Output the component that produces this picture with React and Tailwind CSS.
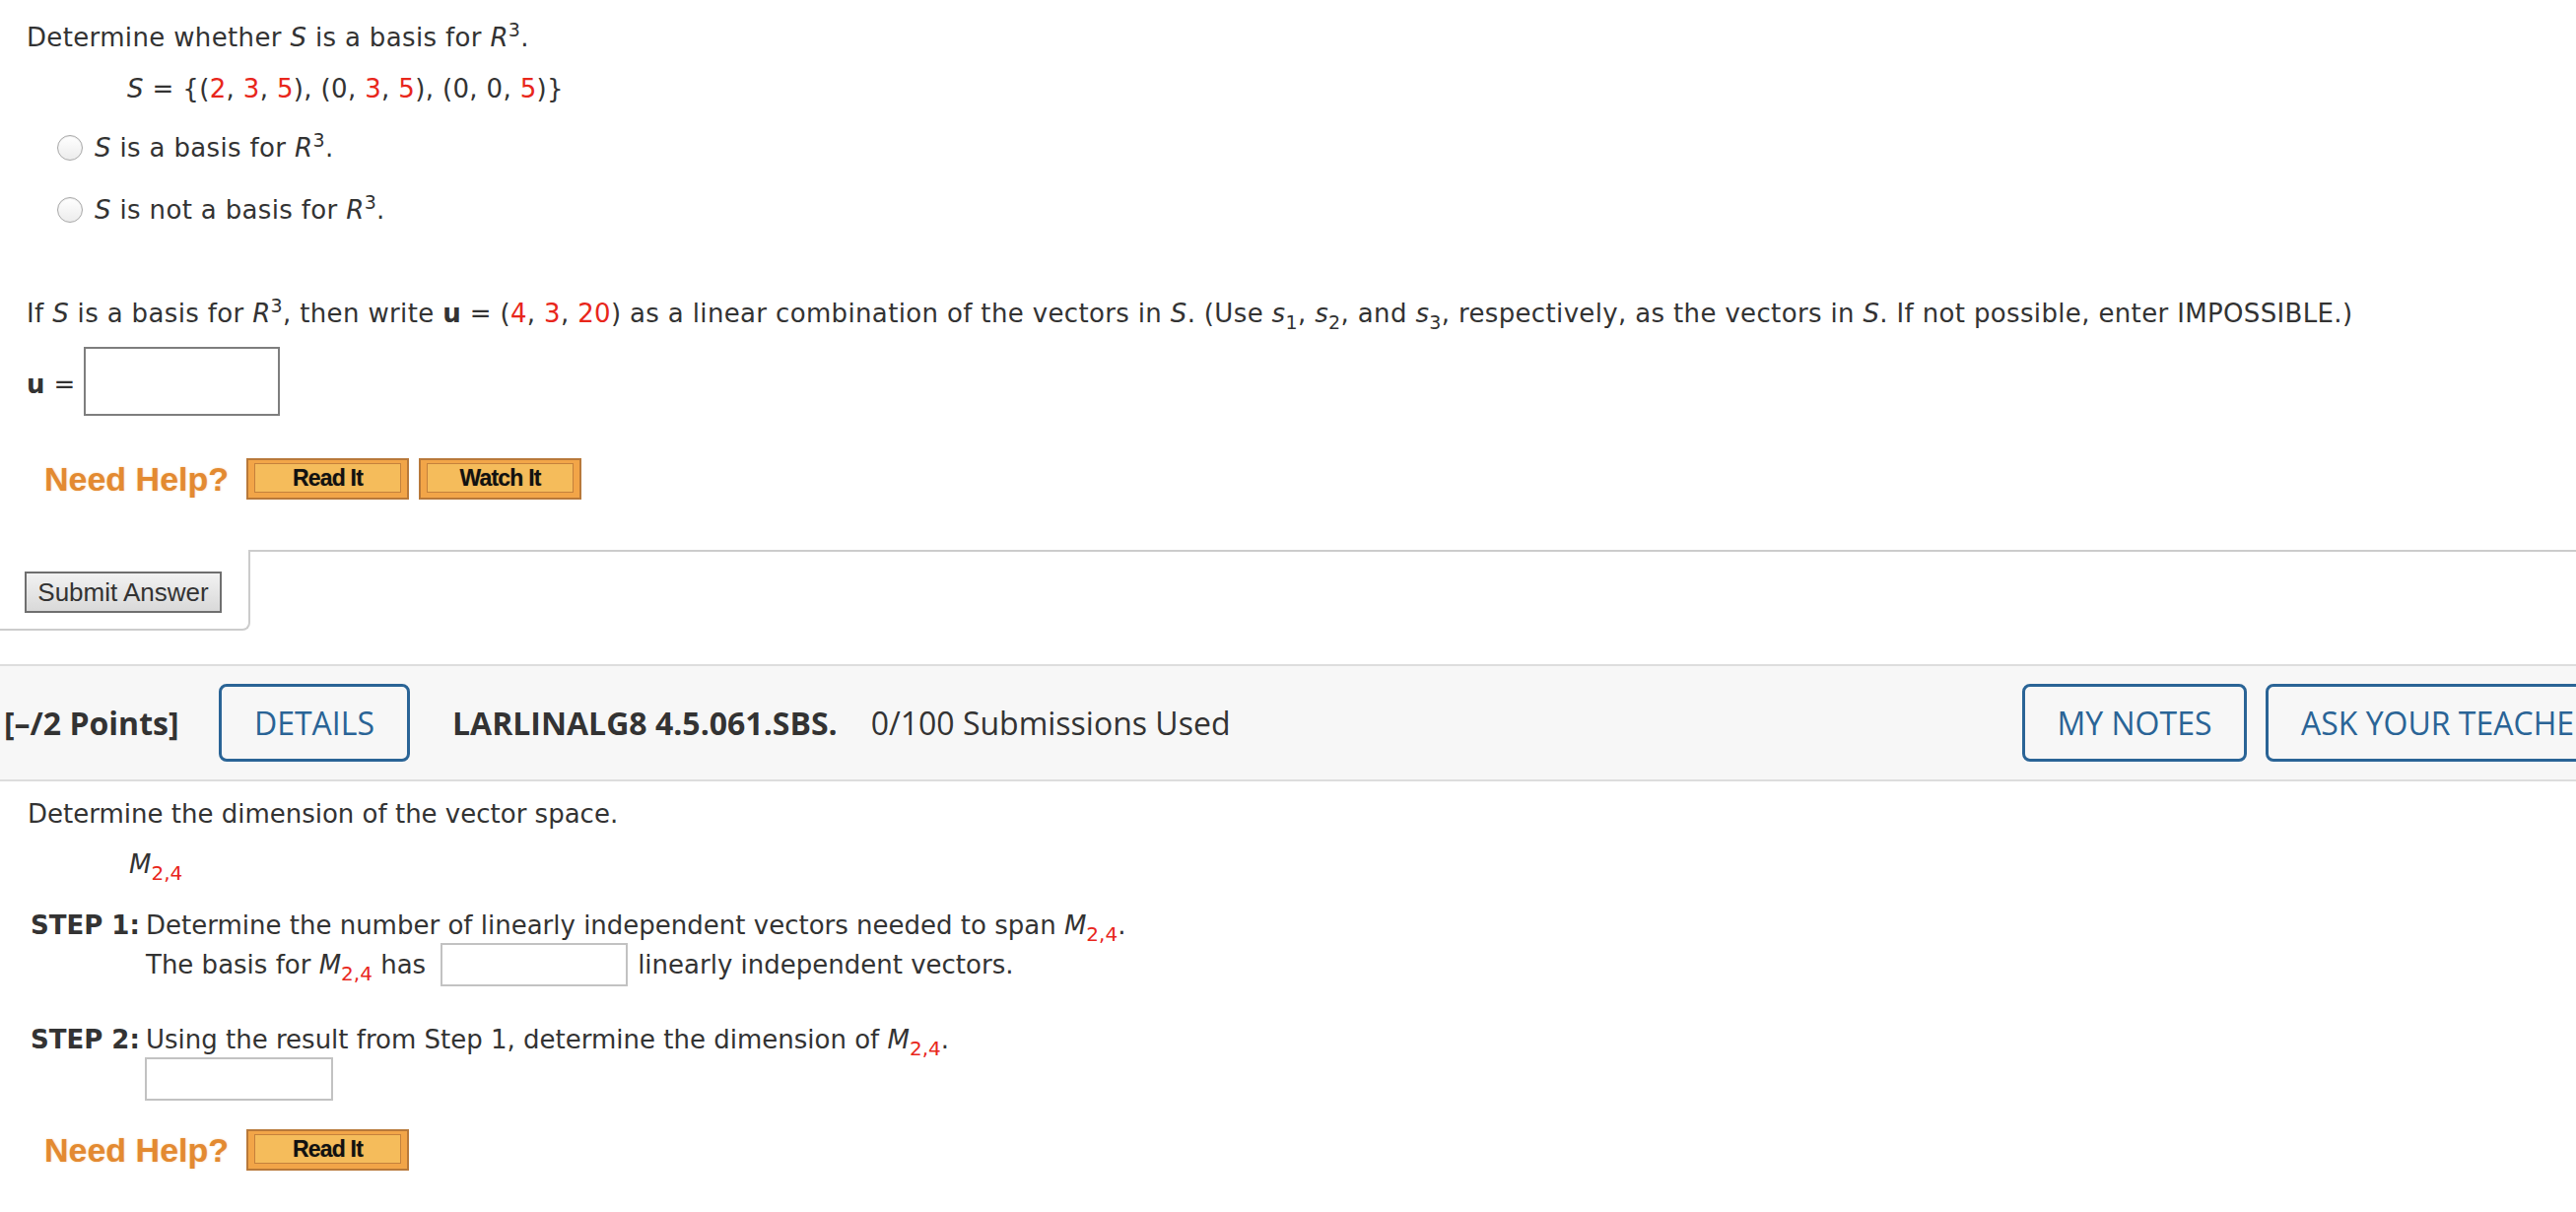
import React from "react";

const RED = "text-[#e8261b]";

function Sup({ children }) {
  return <span className="relative top-[-10px] text-[19px] leading-none">{children}</span>;
}

function Sub({ children, red }) {
  return (
    <span className={`relative top-[7px] text-[19px] leading-none ${red ? RED : ""}`}>{children}</span>
  );
}

function R3() {
  return (
    <>
      <i>R</i>
      <Sup>3</Sup>
    </>
  );
}

function M24() {
  return (
    <>
      <i>M</i>
      <span className={`relative top-[7px] text-[20px] leading-none ${RED}`}>2,4</span>
    </>
  );
}

function Radio({ children }) {
  return (
    <label className="flex items-center h-[32px]">
      <span className="w-[26px] h-[26px] rounded-full border border-[#a8a8a8] bg-gradient-to-b from-white to-[#ececec] shadow-[inset_0_1px_1px_rgba(0,0,0,0.08)]" />
      <span className="ml-[12px]">{children}</span>
    </label>
  );
}

function HelpButton({ label, w = "w-[165px]" }) {
  return (
    <div className={`${w} h-[42px] border-2 border-[#b8793a] bg-[#f2a548] pt-[3px] pb-[5px] px-[6px]`}>
      <div className="h-full border border-[#c4813c] bg-[#f5bc5b] flex items-center justify-center font-['Liberation_Sans',Arial,sans-serif] font-bold text-[23px] tracking-[-0.8px] text-[#111] [text-shadow:0_0_1px_rgba(0,0,0,0.35)]">
        {label}
      </div>
    </div>
  );
}

function NeedHelp({ children }) {
  return (
    <div className="flex items-center h-[42px] pl-[45px]">
      <span className="font-['Liberation_Sans',Arial,sans-serif] font-bold text-[34px] text-[#e38a31] [text-shadow:0_0_2px_rgba(240,170,100,0.6)] w-[205px]">
        Need Help?
      </span>
      <div className="flex gap-[10px]">{children}</div>
    </div>
  );
}

function OutlineButton({ children, className = "" }) {
  return (
    <div
      className={`h-[79px] border-[3px] border-[#2a6496] rounded-[8px] flex items-center text-[#2a6496] text-[32px] shrink-0 ${className}`}
    >
      {children}
    </div>
  );
}

export default function App() {
  return (
    <div className="w-[2614px] h-[1230px] overflow-hidden bg-white text-[#333] font-['DejaVu_Sans',Verdana,sans-serif] text-[26px] leading-[32px]">
      {/* question 1 */}
      <div className="pl-[27px] pt-[22px] tracking-[0.35px]">
        <p>
          Determine whether <i>S</i> is a basis for <R3 />.
        </p>
        <p className="mt-[20px] pl-[102px]">
          <i>S</i> = {"{("}
          <span className={RED}>2</span>, <span className={RED}>3</span>, <span className={RED}>5</span>), (0,{" "}
          <span className={RED}>3</span>, <span className={RED}>5</span>), (0, 0, <span className={RED}>5</span>
          {")}"}
        </p>
        <div className="mt-[28px] pl-[31px]">
          <Radio>
            <i>S</i> is a basis for <R3 />.
          </Radio>
          <div className="mt-[31px]">
            <Radio>
              <i>S</i> is not a basis for <R3 />.
            </Radio>
          </div>
        </div>

        <p className="mt-[73px] whitespace-nowrap">
          If <i>S</i> is a basis for <R3 />, then write <b>u</b> = (<span className={RED}>4</span>,{" "}
          <span className={RED}>3</span>, <span className={RED}>20</span>) as a linear combination of the vectors in{" "}
          <i>S</i>. (Use <i>s</i>
          <Sub>1</Sub>, <i>s</i>
          <Sub>2</Sub>, and <i>s</i>
          <Sub>3</Sub>, respectively, as the vectors in <i>S</i>. If not possible, enter IMPOSSIBLE.)
        </p>

        <div className="mt-[18px] flex items-center">
          <span className="w-[58px] pt-[6px]">
            <b>u</b> =
          </span>
          <div className="w-[199px] h-[70px] border-2 border-[#7e7e7e]" />
        </div>
      </div>

      <div className="mt-[43px]">
        <NeedHelp>
          <HelpButton label="Read It" />
          <HelpButton label="Watch It" />
        </NeedHelp>
      </div>

      {/* submit */}
      <div className="mt-[51px] flex">
        <div className="w-[254px] h-[82px] shrink-0 border-r-2 border-b-2 border-[#cccccc] rounded-br-[8px] pl-[25px] pt-[22px]">
          <button className="w-[200px] h-[42px] border-2 border-[#6f6f6f] bg-gradient-to-b from-[#f2f2f2] to-[#d9d9d9] font-['Liberation_Sans',Arial,sans-serif] text-[26px] text-[#333] leading-none">
            Submit Answer
          </button>
        </div>
        <div className="flex-1 border-t-2 border-[#cccccc]" />
      </div>

      {/* question header bar */}
      <div className="mt-[34px] border-y-2 border-[#dddddd] bg-[#f7f7f7] py-[18px] flex items-center font-['Open_Sans',sans-serif] whitespace-nowrap">
        <div className="w-[2052px] shrink-0 flex items-center pl-[4px]">
          <span className="font-bold text-[32px] w-[218px]">[–/2 Points]</span>
          <OutlineButton className="w-[194px] justify-center">DETAILS</OutlineButton>
          <span className="ml-[43px] font-bold text-[32px]">LARLINALG8 4.5.061.SBS.</span>
          <span className="ml-[34px] text-[32px]">0/100 Submissions Used</span>
        </div>
        <div className="flex gap-[19px]">
          <OutlineButton className="w-[228px] justify-center">MY NOTES</OutlineButton>
          <OutlineButton className="px-[33px]">ASK YOUR TEACHER</OutlineButton>
        </div>
      </div>

      {/* question 2 */}
      <div className="pl-[28px]">
        <p className="mt-[17px]">Determine the dimension of the vector space.</p>
        <p className="mt-[19px] pl-[103px]">
          <M24 />
        </p>
        <div className="mt-[30px] pl-[3px]">
          <div className="flex">
            <span className="font-bold w-[117px] shrink-0">STEP 1:</span>
            <span>
              Determine the number of linearly independent vectors needed to span <M24 />.
            </span>
          </div>
          <div className="mt-[2px] pl-[117px] flex items-center">
            <span>
              The basis for <M24 /> has
            </span>
            <div className="w-[190px] h-[44px] border-2 border-[#c2c2c2] ml-[15px] mr-[10px]" />
            <span>linearly independent vectors.</span>
          </div>

          <div className="mt-[38px] flex">
            <span className="font-bold w-[117px] shrink-0">STEP 2:</span>
            <span>
              Using the result from Step 1, determine the dimension of <M24 />.
            </span>
          </div>
          <div className="mt-[2px] ml-[116px] w-[191px] h-[44px] border-2 border-[#c2c2c2]" />
        </div>
      </div>

      <div className="mt-[29px]">
        <NeedHelp>
          <HelpButton label="Read It" />
        </NeedHelp>
      </div>
    </div>
  );
}
